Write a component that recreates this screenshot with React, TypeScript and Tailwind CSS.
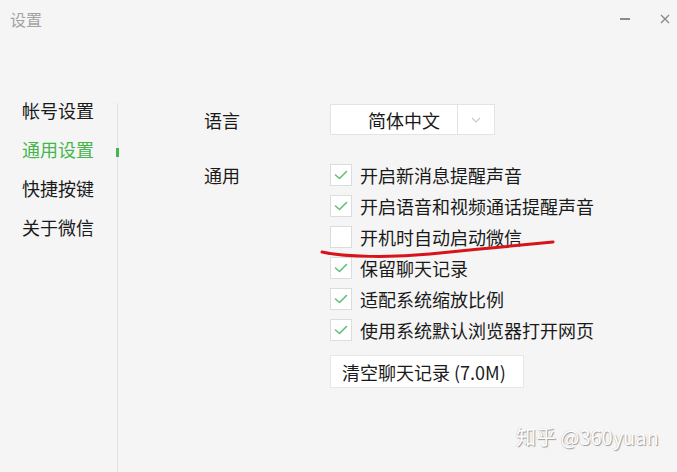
import React from "react";

const font = { fontFamily: '"Noto Sans CJK SC", "Noto Sans", sans-serif' };

function Check({ checked }: { checked: boolean }) {
  return (
    <div className="w-[22px] h-[22px] border border-[#dcdcdc] bg-white flex items-center justify-center shrink-0">
      {checked && (
        <svg width="14" height="10" viewBox="0 0 14 10" fill="none">
          <path d="M1.5 5 L5.5 8.5 L12.5 1.5" stroke="#62c07a" strokeWidth="1.6" strokeLinecap="round" strokeLinejoin="round" />
        </svg>
      )}
    </div>
  );
}

const options: [string, boolean][] = [
  ["开启新消息提醒声音", true],
  ["开启语音和视频通话提醒声音", true],
  ["开机时自动启动微信", false],
  ["保留聊天记录", true],
  ["适配系统缩放比例", true],
  ["使用系统默认浏览器打开网页", true],
];

const nav = ["帐号设置", "通用设置", "快捷按键", "关于微信"];

export default function App() {
  return (
    <div className="relative w-[677px] h-[472px] bg-[#f5f5f5] overflow-hidden text-[#1a1a1a]" style={font}>
      {/* title bar */}
      <div className="h-[38px] flex items-center justify-between pl-[10px] pr-[6px]">
        <span className="text-[16px] leading-none text-[#a3a3a3]">设置</span>
        <div className="flex items-center gap-[30px] pr-[1px]">
          <div className="w-[10px] h-[2px] bg-[#8a8a8a]" />
          <svg width="10" height="10" viewBox="0 0 10 10">
            <path d="M1 1 L9 9 M9 1 L1 9" stroke="#8a8a8a" strokeWidth="1.4" />
          </svg>
        </div>
      </div>

      <div className="flex h-[434px] pt-[65px]">
        {/* sidebar */}
        <div className="w-[118px] border-r border-[#e3e3e3] shrink-0">
          <div className="-mt-[2px]">
            {nav.map((n, i) => (
              <div key={n} className="relative h-[39px] pl-[22px] text-[18px] leading-[18px]">
                <span className={i === 1 ? "text-[#45b64e]" : "text-[#1a1a1a]"}>{n}</span>
                {i === 1 && <div className="absolute right-[-2px] top-[8px] w-[3px] h-[9px] bg-[#45b64e]" />}
              </div>
            ))}
          </div>
        </div>

        {/* content */}
        <div className="flex-1 pl-[86px] -mt-[63px] pt-[65px]">
          <div className="flex items-center h-[31px] mt-[-1px]">
            <div className="w-[126px] text-[18px] leading-none">语言</div>
            <div className="flex h-[31px] bg-white border border-[#e3e3e3]">
              <div className="w-[126px] pl-[37px] flex items-center text-[18px] leading-none">简体中文</div>
              <div className="w-[37px] border-l border-[#e3e3e3] flex items-center justify-center">
                <svg width="10" height="6" viewBox="0 0 10 6">
                  <path d="M1 1 L5 5 L9 1" stroke="#c8c8c8" strokeWidth="1.1" fill="none" />
                </svg>
              </div>
            </div>
          </div>

          <div className="flex mt-[24px]">
            <div className="w-[126px] h-[31px] flex items-center text-[18px] leading-none">通用</div>
            <div className="flex flex-col">
              {options.map(([t, c]) => (
                <div key={t} className="h-[31px] flex items-center gap-[8px]">
                  <Check checked={c} />
                  <span className="text-[18px] leading-none">{t}</span>
                </div>
              ))}
              <div className="mt-[10px] w-[194px] h-[33px] bg-white border border-[#e6e6e6] flex items-center pl-[11px] text-[18px] leading-none">
                清空聊天记录 (7.0M)
              </div>
            </div>
          </div>
        </div>
      </div>

      {/* red annotation */}
      <svg className="absolute left-0 top-0 pointer-events-none" width="677" height="472">
        <path
          d="M322 252 C 345 257, 390 258, 430 254 C 470 250, 520 245, 553 242"
          stroke="#d6151b"
          strokeWidth="3"
          fill="none"
          strokeLinecap="round"
        />
      </svg>

      {/* watermark */}
      <div
        className="absolute left-[516px] top-[427px] text-[20px] leading-none text-white whitespace-nowrap"
        style={{ textShadow: "1px 1px 1px #9a9a9a, -0.5px -0.5px 0.5px #c8c8c8" }}
      >
        知乎 @360yuan
      </div>
    </div>
  );
}
